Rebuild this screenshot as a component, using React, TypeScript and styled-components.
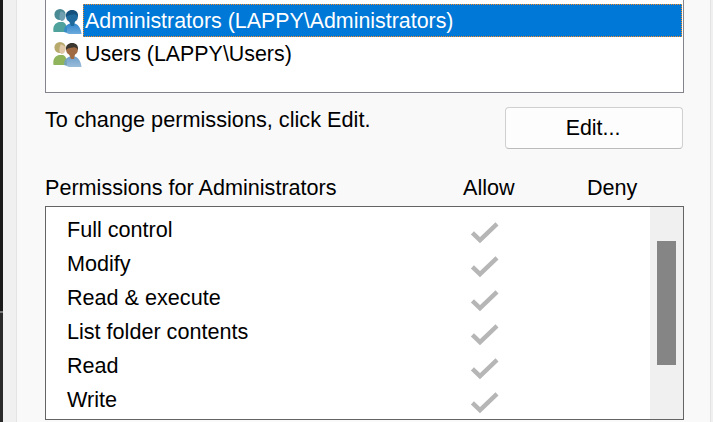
import React from "react";
import styled, { createGlobalStyle } from "styled-components";

const Global = createGlobalStyle`
  html, body { margin: 0; padding: 0; width: 713px; height: 422px; overflow: hidden; background: #f0f0f0; }
  #root { width: 713px; height: 422px; }
`;

const Screen = styled.div`
  display: flex;
  width: 713px;
  height: 422px;
  overflow: hidden;
  font-family: "Liberation Sans", Arial, sans-serif;
  font-size: 21.6px;
  color: #000;
`;
const DarkEdge = styled.div`
  width: 3px;
  flex: none;
  background: linear-gradient(#1a1a1a 311px, #787878 311px, #787878 313px, #2a2a2a 313px);
`;
const Gutter = styled.div<{ $w: number }>`
  width: ${(p) => p.$w}px;
  flex: none;
  background: #f0f0f0;
`;
const Panel = styled.div`
  width: 695px;
  flex: none;
  box-sizing: border-box;
  background: #f9f9f9;
  border-left: 1px solid #e4e4e4;
  border-right: 1px solid #e4e4e4;
  padding-left: 28px;
  display: flex;
  flex-direction: column;
`;
const PrincipalBox = styled.div`
  width: 639px;
  height: 93px;
  box-sizing: border-box;
  background: #fff;
  border: 1px solid #84848c;
  border-top: none;
  padding: 4px 1px 0 6px;
  display: flex;
  flex-direction: column;
  font-size: 21.4px;
`;
const PrincipalRow = styled.div`
  height: 33px;
  display: flex;
  align-items: center;
`;
const IconSlot = styled.span`
  width: 31px;
  height: 28px;
  flex: none;
  display: flex;
  align-items: center;
`;
const PrincipalName = styled.span<{ $selected?: boolean }>`
  flex: ${(p) => (p.$selected ? 1 : "none")};
  height: 33px;
  box-sizing: border-box;
  line-height: 35px;
  padding-left: 2px;
  color: ${(p) => (p.$selected ? "#fff" : "#000")};
  background: ${(p) => (p.$selected ? "#0078d7" : "transparent")};
  outline: ${(p) => (p.$selected ? "1px dotted #f08a24" : "none")};
  outline-offset: -1px;
`;
const EditRow = styled.div`
  display: flex;
  justify-content: space-between;
  width: 638px;
  margin-top: 14px;
  height: 42px;
`;
const Hint = styled.span`
  line-height: 26px;
  font-size: 21.7px;
`;
const EditButton = styled.button`
  width: 178px;
  height: 42px;
  box-sizing: border-box;
  background: #fdfdfd;
  border: 1px solid #d0d0d0;
  border-bottom-color: #bcbcbc;
  border-radius: 4px;
  font: inherit;
  font-size: 21.4px;
  color: #000;
  padding: 0 2px 0 0;
`;
const HeaderRow = styled.div`
  display: grid;
  grid-template-columns: 418px 124px 1fr;
  margin-top: 27px;
  height: 24px;
  line-height: 24px;
`;
const PermissionBox = styled.div`
  width: 639px;
  height: 214px;
  margin-top: 6px;
  box-sizing: border-box;
  background: #fff;
  border: 1px solid #646464;
  display: flex;
`;
const PermissionList = styled.div`
  flex: 1;
  padding: 5px 0 0 21px;
  overflow: hidden;
`;
const PermissionRow = styled.div`
  height: 34px;
  display: grid;
  grid-template-columns: 402px 1fr;
  align-items: center;
`;
const PermissionLabel = styled.span`
  line-height: 36px;
  height: 34px;
`;
const Check = styled.svg`
  display: block;
  width: 30px;
  height: 24px;
  margin-top: 6px;
`;
const ScrollTrack = styled.div`
  width: 33px;
  flex: none;
  background: #f0f0f0;
  padding: 34px 7px 0 7px;
  box-sizing: border-box;
`;
const ScrollThumb = styled.div`
  height: 124px;
  background: #858585;
`;

const CheckMark = () => (
  <Check viewBox="0 0 30 24">
    <path d="M3.4 12.8 L11 20.2 L28 3.8" fill="none" stroke="#b6b6b6" strokeWidth="4.4" />
  </Check>
);

type PeopleProps = {
  id: string;
  backHair: string;
  backFace: string;
  backBody: string;
  frontHair: string;
  frontFace: string;
  frontBody: string;
};

const People = ({ id, backHair, backFace, backBody, frontHair, frontFace, frontBody }: PeopleProps) => (
  <svg width="30" height="28" viewBox="0 0 30 28">
    <defs>
      <linearGradient id={id} x1="0" y1="0" x2="0" y2="1">
        <stop offset="0" stopColor={frontBody} />
        <stop offset="1" stopColor={frontBody} stopOpacity="0.7" />
      </linearGradient>
    </defs>
    <path d="M1.5 25 C0.5 19 3 16 7 15 L11 15 C14 16 15 19 15 25 Z" fill={backBody} />
    <circle cx="8" cy="7.5" r="5.6" fill={backHair} />
    <path d="M8.5 4.5 C11 4.5 13.5 6 13.5 9 C13.5 12 11.5 14 9.5 14 C7.5 13 7 11 7.5 8 Z" fill={backFace} />
    <path d="M12 25 C12 20 14 18 18 16.5 L23 16.5 C27 18 29 22 29.5 27 L17 27 Z" fill={`url(#${id})`} />
    <path d="M17 14 L19 19 L22 19 L23 14 Z" fill={frontFace} />
    <circle cx="20" cy="9.5" r="6" fill={frontFace} />
    <path d="M14 10 C13.5 5 16.5 3 20 3 C24 3 26.5 5.5 26 10 C25 8 23 7 21 7.5 C18 8 15.5 8 14 10 Z" fill={frontHair} />
  </svg>
);

const permissions = [
  "Full control",
  "Modify",
  "Read & execute",
  "List folder contents",
  "Read",
  "Write",
];

export default function App() {
  return (
    <Screen>
      <Global />
      <DarkEdge />
      <Gutter $w={13} />
      <Panel>
        <PrincipalBox>
          <PrincipalRow>
            <IconSlot>
              <People id="a" backHair="#4a8a94" backFace="#6f9fb0" backBody="#4fa39c" frontHair="#14517c" frontFace="#1f6a9c" frontBody="#2f86cc" />
            </IconSlot>
            <PrincipalName $selected>Administrators (LAPPY\Administrators)</PrincipalName>
          </PrincipalRow>
          <PrincipalRow>
            <IconSlot>
              <People id="u" backHair="#b8aa6c" backFace="#e0c8a8" backBody="#8fb45c" frontHair="#3c3630" frontFace="#a06a42" frontBody="#6f9fca" />
            </IconSlot>
            <PrincipalName>Users (LAPPY\Users)</PrincipalName>
          </PrincipalRow>
        </PrincipalBox>
        <EditRow>
          <Hint>To change permissions, click Edit.</Hint>
          <EditButton>Edit...</EditButton>
        </EditRow>
        <HeaderRow>
          <span>Permissions for Administrators</span>
          <span>Allow</span>
          <span>Deny</span>
        </HeaderRow>
        <PermissionBox>
          <PermissionList>
            {permissions.map((p) => (
              <PermissionRow key={p}>
                <PermissionLabel>{p}</PermissionLabel>
                <CheckMark />
              </PermissionRow>
            ))}
          </PermissionList>
          <ScrollTrack><ScrollThumb /></ScrollTrack>
        </PermissionBox>
      </Panel>
      <Gutter $w={2} />
    </Screen>
  );
}
